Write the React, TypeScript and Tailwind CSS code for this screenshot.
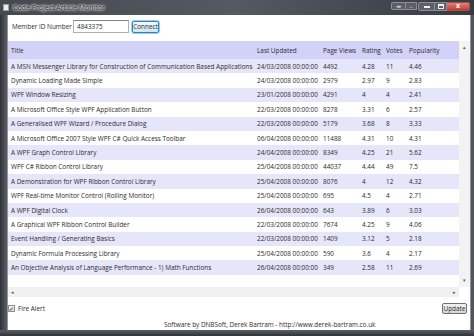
import React from "react";

type Article = {
  title: string;
  updated: string;
  views: string;
  rating: string;
  votes: string;
  popularity: string;
};

const articles: Article[] = [
  { title: "A MSN Messenger Library for Construction of Communication Based Applications", updated: "24/03/2008 00:00:00", views: "4492", rating: "4.28", votes: "11", popularity: "4.46" },
  { title: "Dynamic Loading Made Simple", updated: "24/03/2008 00:00:00", views: "2979", rating: "2.97", votes: "9", popularity: "2.83" },
  { title: "WPF Window Resizing", updated: "23/01/2008 00:00:00", views: "4291", rating: "4", votes: "4", popularity: "2.41" },
  { title: "A Microsoft Office Style WPF Application Button", updated: "22/03/2008 00:00:00", views: "8278", rating: "3.31", votes: "6", popularity: "2.57" },
  { title: "A Generalised WPF Wizard / Procedure Dialog", updated: "22/03/2008 00:00:00", views: "5179", rating: "3.68", votes: "8", popularity: "3.33" },
  { title: "A Microsoft Office 2007 Style WPF C# Quick Access Toolbar", updated: "06/04/2008 00:00:00", views: "11488", rating: "4.31", votes: "10", popularity: "4.31" },
  { title: "A WPF Graph Control Library", updated: "24/04/2008 00:00:00", views: "8349", rating: "4.25", votes: "21", popularity: "5.62" },
  { title: "WPF C# Ribbon Control Library", updated: "25/04/2008 00:00:00", views: "44037", rating: "4.44", votes: "49", popularity: "7.5" },
  { title: "A Demonstration for WPF Ribbon Control Library", updated: "25/04/2008 00:00:00", views: "8076", rating: "4", votes: "12", popularity: "4.32" },
  { title: "WPF Real-time Monitor Control (Rolling Monitor)", updated: "25/04/2008 00:00:00", views: "695", rating: "4.5", votes: "4", popularity: "2.71" },
  { title: "A WPF Digital Clock", updated: "26/04/2008 00:00:00", views: "643", rating: "3.89", votes: "6", popularity: "3.03" },
  { title: "A Graphical WPF Ribbon Control Builder", updated: "22/03/2008 00:00:00", views: "7674", rating: "4.25", votes: "9", popularity: "4.06" },
  { title: "Event Handling / Generating Basics", updated: "22/03/2008 00:00:00", views: "1409", rating: "3.12", votes: "5", popularity: "2.18" },
  { title: "Dynamic Formula Processing Library", updated: "25/04/2008 00:00:00", views: "590", rating: "3.6", votes: "4", popularity: "2.17" },
  { title: "An Objective Analysis of Language Performance - 1) Math Functions", updated: "26/04/2008 00:00:00", views: "349", rating: "2.58", votes: "11", popularity: "2.69" },
];

const cols = "grid grid-cols-[246px_66px_39px_24px_23px_36px]";

function TitleBar() {
  return (
    <div className="h-[15px] flex items-center bg-gradient-to-r from-[#454a51] via-[#555a61] to-[#363b41]">
      <div className="ml-[3px] w-[6px] h-[7px] bg-[#e9ecef] border border-[#9aa3ab]" />
      <span className="ml-[4px] text-[7px] leading-[10px] text-[#1e1e1e] [text-shadow:0_0_3px_#fff,0_0_3px_#fff,0_0_2px_#fff]">
        Code Project Article Monitor
      </span>
      <div className="ml-auto mr-[4px] flex items-center h-[10px] self-start mt-[1px]">
        <div className="w-[15px] h-[8px] border border-[#8b9096] bg-[#5a5f66] rounded-l-[2px] flex items-center justify-center text-[5px] leading-[6px] text-[#ddd]">
          ◂▸
        </div>
        <div className="w-[11px] h-[8px] border-y border-r border-[#8b9096] bg-[#5a5f66] flex items-center justify-center text-[5px] leading-[6px] text-[#ddd]">
          ↔
        </div>
        <div className="ml-[1px] w-[17px] h-[9px] border border-[#8b9096] bg-[#5c6168] rounded-l-[2px] flex items-end justify-center pb-[2px]">
          <div className="w-[6px] h-[2px] bg-[#f2f2f2]" />
        </div>
        <div className="w-[12px] h-[9px] border-y border-r border-[#8b9096] bg-[#5c6168] flex items-center justify-center">
          <div className="w-[6px] h-[5px] border border-[#f2f2f2] border-t-2" />
        </div>
        <div className="w-[23px] h-[9px] border-y border-r border-[#a85048] bg-gradient-to-b from-[#e0807a] to-[#c2392e] rounded-r-[2px] flex items-center justify-center text-[7px] font-bold text-white leading-[8px]">
          x
        </div>
      </div>
    </div>
  );
}

function ArticleList() {
  return (
    <div className="h-[257px] flex flex-col">
      <div className="flex h-[246px]">
        <div className="flex-1 flex flex-col">
          <div className={`${cols} h-[18px] items-center bg-[#d2d2f8]`}>
            <div className="pl-[3px]">Title</div>
            <div className="pl-[3px]">Last Updated</div>
            <div className="pl-[3px]">Page Views</div>
            <div className="pl-[3px]">Rating</div>
            <div className="pl-[3px]">Votes</div>
            <div className="pl-[3px]">Popularity</div>
          </div>
          {articles.map((a, i) => (
            <div
              key={i}
              className={`${cols} h-[14.4px] items-center ${i % 2 === 0 ? "bg-[#e6e6fa]" : "bg-white"}`}
            >
              <div className="pl-[3px] whitespace-nowrap">{a.title}</div>
              <div className="pl-[3px] whitespace-nowrap">{a.updated}</div>
              <div className="pl-[3px]">{a.views}</div>
              <div className="pl-[3px]">{a.rating}</div>
              <div className="pl-[3px]">{a.votes}</div>
              <div className="pl-[3px]">{a.popularity}</div>
            </div>
          ))}
        </div>
        <div className="w-[11px] bg-[#f3f3f3] flex flex-col items-center justify-between py-[2px] text-[5px] text-[#555]">
          <span>▴</span>
          <span>▾</span>
        </div>
      </div>
      <div className="flex h-[10px] bg-[#f0f0f0] items-center justify-between px-[3px] mr-[11px] text-[5px] text-[#555]">
        <span>◂</span>
        <span>▸</span>
      </div>
    </div>
  );
}

export default function App() {
  return (
    <div className="w-[474px] h-[336px] flex flex-col bg-[#3c4147] font-['Open_Sans',sans-serif] text-[6.4px] text-[#2a2a2a] leading-[9px] overflow-hidden">
      <TitleBar />
      <div className="flex flex-1">
        <div className="w-[7px] bg-gradient-to-r from-[#2f3338] to-[#5a5f66]" />
        <div className="flex-1 bg-white flex flex-col border-l border-[#8e949b]">
          <div className="h-[26px] flex items-center pb-[3px]">
            <div className="w-[65px] pl-[4px]">Member ID Number</div>
            <div className="w-[56px] h-[13px] border border-[#a9b0b8] border-t-[#7d848c] flex items-center pl-[3px]">
              4843375
            </div>
            <div className="ml-[3px] w-[27px] h-[12px] border border-[#3c7fb1] rounded-[2px] bg-gradient-to-b from-[#f4f9fc] to-[#cde6f3] shadow-[0_0_0_1px_#8fd3ee] flex items-center justify-center">
              Connect
            </div>
          </div>
          <ArticleList />
          <div className="mt-[5px] h-[11px] flex items-center justify-between pr-[3px]">
            <div className="flex items-center">
              <div className="w-[7px] h-[7px] border border-[#8f8f8f] bg-gradient-to-b from-[#f1f1f1] to-[#d8d8d8] flex items-center justify-center text-[6px] leading-[6px] text-[#222]">
                ✓
              </div>
              <span className="ml-[3px]">Fire Alert</span>
            </div>
            <div className="w-[25px] h-[11px] border border-[#707070] rounded-[2px] bg-gradient-to-b from-[#f2f2f2] to-[#d6d6d6] flex items-center justify-center">
              Update
            </div>
          </div>
          <div className="pt-[6px] pl-[156px] whitespace-nowrap leading-[10px]">
            Software by DNBSoft, Derek Bartram - http://www.derek-bartram.co.uk
          </div>
        </div>
        <div className="w-[4px] bg-[#50555c] border-l border-[#8e949b]" />
      </div>
      <div className="h-[6px] bg-gradient-to-b from-[#5a5f66] to-[#2f3338]" />
    </div>
  );
}
